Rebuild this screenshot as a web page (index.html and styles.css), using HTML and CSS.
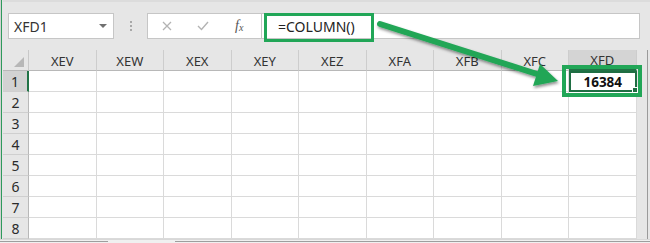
FILE: index.html
```html
<html>
<head>
    <meta charset="utf-8">
    <title>COLUMN function</title>
    <link rel="stylesheet" href="styles.css">
</head>
<body>
    <div class="window">
        <div class="ribbon">
            <div class="namebox">
                <span>XFD1</span>
                <span class="caret"></span>
            </div>
            <div class="grip"><i></i><i></i><i></i></div>
            <div class="fbar">
                <div class="fbar-icons">
                    <svg width="10" height="10" viewBox="0 0 10 10"><path d="M1 1L9 9M9 1L1 9" stroke="#b3b3b3" stroke-width="1.3" fill="none"/></svg>
                    <svg width="12" height="10" viewBox="0 0 12 10"><path d="M1 5L4.5 8.5L11 1" stroke="#b3b3b3" stroke-width="1.4" fill="none"/></svg>
                    <span class="fx">f<sub>x</sub></span>
                </div>
                <div class="fbar-input">=COLUMN()</div>
            </div>
        </div>

        <div class="sheet">
            <div class="grid">
                <div class="corner"></div>
                <div class="col-head">XEV</div>
                <div class="col-head">XEW</div>
                <div class="col-head">XEX</div>
                <div class="col-head">XEY</div>
                <div class="col-head">XEZ</div>
                <div class="col-head">XFA</div>
                <div class="col-head">XFB</div>
                <div class="col-head">XFC</div>
                <div class="col-head active">XFD</div>

                <div class="row-head active">1</div>
                <div class="cell"></div><div class="cell"></div><div class="cell"></div><div class="cell"></div>
                <div class="cell"></div><div class="cell"></div><div class="cell"></div><div class="cell"></div>
                <div class="cell selected">16384<span class="handle"></span></div>

                <div class="row-head">2</div>
                <div class="cell"></div><div class="cell"></div><div class="cell"></div><div class="cell"></div>
                <div class="cell"></div><div class="cell"></div><div class="cell"></div><div class="cell"></div><div class="cell"></div>

                <div class="row-head">3</div>
                <div class="cell"></div><div class="cell"></div><div class="cell"></div><div class="cell"></div>
                <div class="cell"></div><div class="cell"></div><div class="cell"></div><div class="cell"></div><div class="cell"></div>

                <div class="row-head">4</div>
                <div class="cell"></div><div class="cell"></div><div class="cell"></div><div class="cell"></div>
                <div class="cell"></div><div class="cell"></div><div class="cell"></div><div class="cell"></div><div class="cell"></div>

                <div class="row-head">5</div>
                <div class="cell"></div><div class="cell"></div><div class="cell"></div><div class="cell"></div>
                <div class="cell"></div><div class="cell"></div><div class="cell"></div><div class="cell"></div><div class="cell"></div>

                <div class="row-head">6</div>
                <div class="cell"></div><div class="cell"></div><div class="cell"></div><div class="cell"></div>
                <div class="cell"></div><div class="cell"></div><div class="cell"></div><div class="cell"></div><div class="cell"></div>

                <div class="row-head">7</div>
                <div class="cell"></div><div class="cell"></div><div class="cell"></div><div class="cell"></div>
                <div class="cell"></div><div class="cell"></div><div class="cell"></div><div class="cell"></div><div class="cell"></div>

                <div class="row-head">8</div>
                <div class="cell"></div><div class="cell"></div><div class="cell"></div><div class="cell"></div>
                <div class="cell"></div><div class="cell"></div><div class="cell"></div><div class="cell"></div><div class="cell"></div>
            </div>
            <div class="vscroll"></div>
        </div>
        <div class="hscroll"></div>

        <!-- annotation: boxes + arrow drawn over the sheet -->
        <svg class="callout" width="650" height="243" viewBox="0 0 650 243">
            <defs>
                <filter id="shadow" x="-10%" y="-30%" width="130%" height="180%">
                    <feDropShadow dx="1" dy="2" stdDeviation="1.5" flood-color="#000" flood-opacity="0.45"/>
                </filter>
            </defs>
            <rect x="265.5" y="14.5" width="107" height="26" fill="none" stroke="#21a657" stroke-width="3"/>
            <rect x="564" y="67" width="76" height="28" fill="none" stroke="#21a657" stroke-width="4"/>
            <g filter="url(#shadow)">
                <line x1="380" y1="24" x2="537" y2="74" stroke="#21a657" stroke-width="6" stroke-linecap="round"/>
                <polygon points="558,81 533,86 540,64" fill="#21a657"/>
            </g>
        </svg>
    </div>
</body>
</html>
```

FILE: styles.css
```css
html, body{
    margin: 0;
    padding: 0;
}

body{
    width: 650px;
    height: 243px;
    overflow: hidden;
    font-family: "Noto Sans", "Open Sans", sans-serif;
    color: #333;
}

.window{
    position: relative;
    width: 650px;
    height: 243px;
    background: #e6e6e6;
    box-shadow: inset 1px 0 #d2d2d2, inset 2px 0 #2e9a5c;
    padding-left: 3px;
    box-sizing: border-box;
    display: flex;
    flex-direction: column;
}

/* name box + formula bar */
.ribbon{
    height: 50px;
    display: flex;
    align-items: flex-start;
    padding-top: 11px;
    box-sizing: border-box;
    border-top: 2px solid #dcdcdc;
}

.namebox{
    margin-left: 5px;
    width: 106px;
    height: 26px;
    box-sizing: border-box;
    background: #fff;
    border: 1px solid #c6c6c6;
    display: flex;
    align-items: center;
    justify-content: space-between;
    padding: 0 6px 0 5px;
    font-size: 14px;
    color: #333;
}

.caret{
    width: 0;
    height: 0;
    border-left: 4px solid transparent;
    border-right: 4px solid transparent;
    border-top: 4px solid #707070;
}

.grip{
    width: 33px;
    height: 26px;
    display: flex;
    flex-direction: column;
    align-items: center;
    justify-content: center;
    gap: 2px;
}

.grip i{
    width: 2px;
    height: 2px;
    background: #a8a8a8;
}

.fbar{
    flex: 1;
    display: flex;
    height: 26px;
    margin-right: 10px;
}

.fbar-icons{
    width: 115px;
    box-sizing: border-box;
    background: #fff;
    border: 1px solid #c6c6c6;
    display: flex;
    align-items: center;
    padding-left: 14px;
    gap: 25px;
}

.fx{
    font-family: "Liberation Serif", serif;
    font-style: italic;
    font-size: 14px;
    color: #555;
    margin-left: 1px;
}

.fx sub{
    font-size: 10px;
    vertical-align: -1px;
}

.fbar-input{
    flex: 1;
    background: #fff;
    border: 1px solid #c6c6c6;
    border-left: none;
    display: flex;
    align-items: center;
    padding-left: 16px;
    font-size: 14px;
    color: #222;
}

/* sheet */
.sheet{
    display: flex;
    height: 189px;
}

.grid{
    display: grid;
    grid-template-columns: 26px repeat(9, 67.5px);
    grid-auto-rows: 21px;
    background: #fff;
}

.grid > div{
    box-sizing: border-box;
    display: flex;
    align-items: center;
    justify-content: center;
    font-size: 13px;
}

.corner{
    position: relative;
    background: #e6e6e6;
    border-right: 1px solid #c8c8c8;
    border-bottom: 1px solid #b8b8b8;
}

.corner::after{
    content: "";
    position: absolute;
    right: 4px;
    bottom: 3px;
    width: 0;
    height: 0;
    border-left: 10px solid transparent;
    border-bottom: 10px solid #b7b7b7;
}

.col-head{
    background: #e6e6e6;
    border-right: 1px solid #cdcdcd;
    border-bottom: 1px solid #b8b8b8;
    color: #333;
    padding-top: 1px;
}

.col-head.active{
    background: #d4d4d4;
    border-bottom: 2px solid #217346;
}

.grid > .row-head{
    background: #e6e6e6;
    border-right: 1px solid #b8b8b8;
    border-bottom: 1px solid #cfcfcf;
    color: #2b2b2b;
    font-size: 14px;
}

.grid > .row-head.active{
    background: #d2d2d2;
    border-right: 2px solid #217346;
}

.cell{
    border-right: 1px solid #dadada;
    border-bottom: 1px solid #dadada;
}

.grid > .cell.selected{
    position: relative;
    border: 2px solid #1f6e43;
    font-weight: bold;
    font-size: 13.5px;
    color: #111;
    padding-top: 1px;
}

.handle{
    position: absolute;
    right: -3px;
    bottom: -3px;
    width: 6px;
    height: 6px;
    background: #1f6e43;
    border: 1px solid #fff;
    box-sizing: border-box;
}

.vscroll{
    flex: 1;
    background: #e6e6e6;
    border-right: 1px solid #9a9a9a;
    margin-right: 2px;
}

.hscroll{
    flex: 1;
    margin-left: -3px;
    background: linear-gradient(#9e9e9e, #9e9e9e) 0 1px / 108px 1px no-repeat,
                linear-gradient(#9e9e9e, #9e9e9e) 175px 1px / 100% 1px no-repeat,
                #f0f0f0;
    border-top: 1px solid #d8d8d8;
}

.callout{
    position: absolute;
    left: 0;
    top: 0;
    pointer-events: none;
}
```
